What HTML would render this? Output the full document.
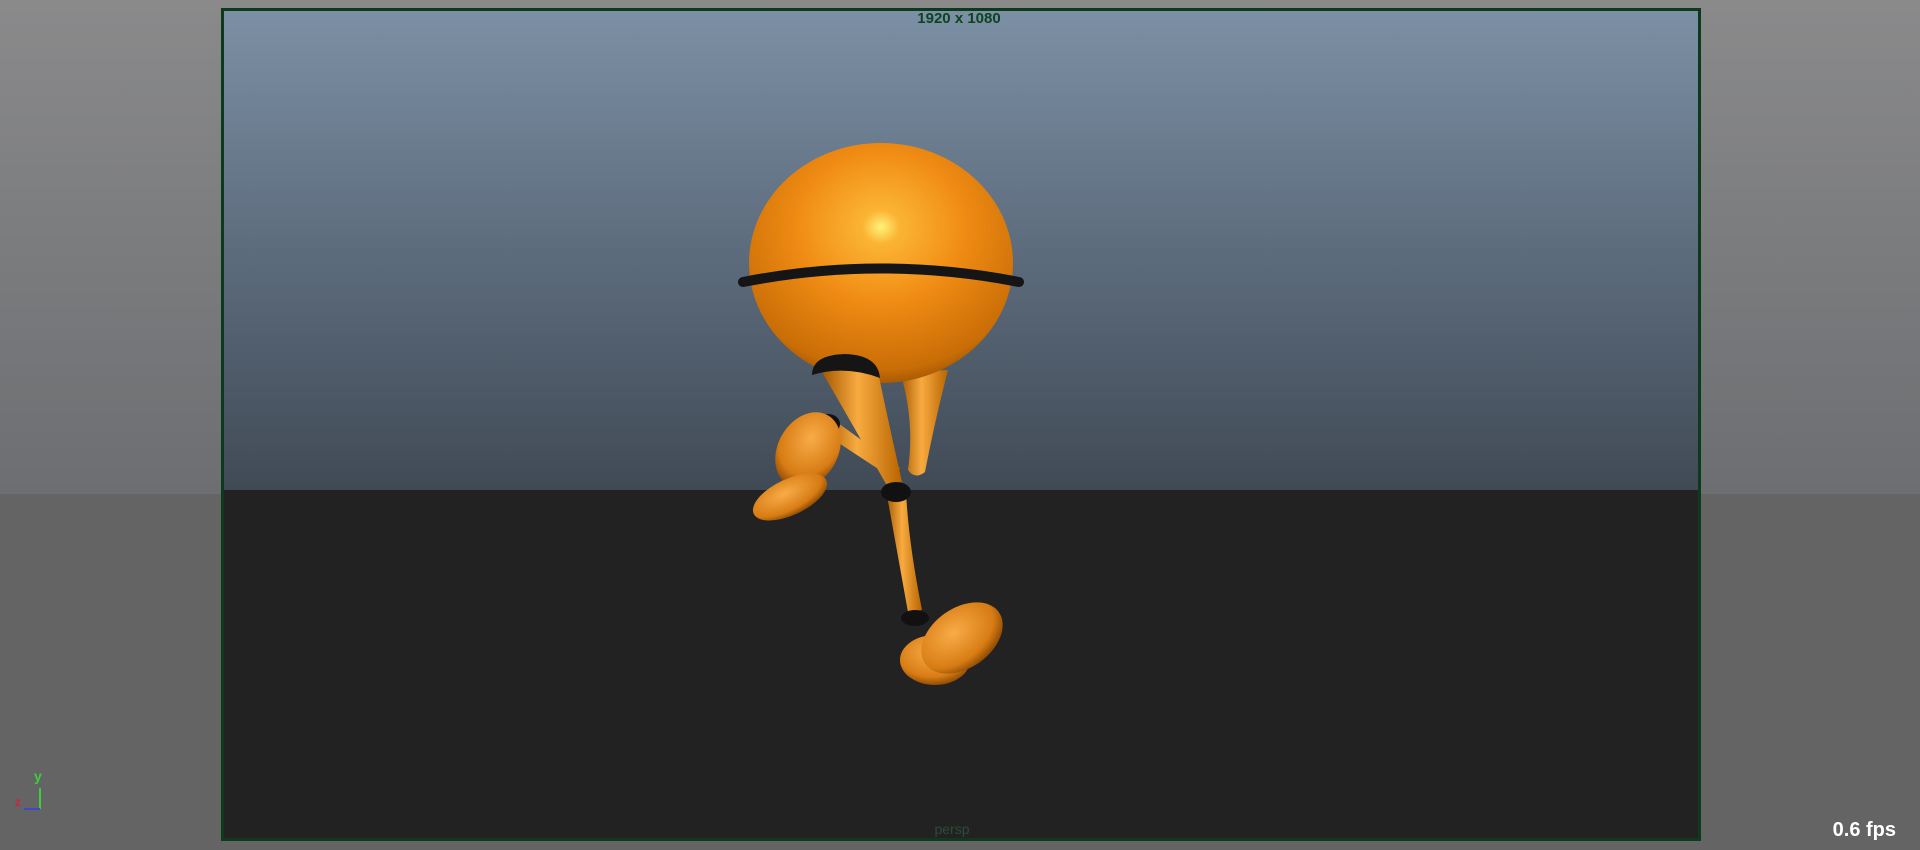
<!DOCTYPE html>
<html><head><meta charset="utf-8"><style>
html,body{margin:0;padding:0;width:1920px;height:850px;overflow:hidden;background:#646464}
svg{display:block}
</style></head><body>
<svg width="1920" height="850" viewBox="0 0 1920 850" xmlns="http://www.w3.org/2000/svg">
<defs>
<linearGradient id="out" x1="0" y1="0" x2="0" y2="1"><stop offset="0" stop-color="#8a8a8b"/><stop offset="1" stop-color="#6c6e71"/></linearGradient>
<linearGradient id="sky" x1="0" y1="0" x2="0" y2="1"><stop offset="0" stop-color="#7c90a5"/><stop offset="0.5" stop-color="#5d6c7d"/><stop offset="1" stop-color="#404a55"/></linearGradient>
<radialGradient id="ball" cx="0.5" cy="0.35" r="0.7"><stop offset="0" stop-color="#fff27a"/><stop offset="0.1" stop-color="#fbb434"/><stop offset="0.45" stop-color="#f08c14"/><stop offset="0.85" stop-color="#c96d06"/><stop offset="1" stop-color="#8a4a00"/></radialGradient>
<linearGradient id="leg" x1="0" y1="0" x2="1" y2="0"><stop offset="0" stop-color="#a55800"/><stop offset="0.45" stop-color="#f8ab40"/><stop offset="1" stop-color="#b86400"/></linearGradient>
<radialGradient id="foot" cx="0.45" cy="0.35" r="0.7"><stop offset="0" stop-color="#f8ac48"/><stop offset="0.7" stop-color="#d87c14"/><stop offset="1" stop-color="#7a3e00"/></radialGradient>
</defs>
<rect width="1920" height="494" fill="url(#out)"/>
<rect y="494" width="1920" height="356" fill="#646464"/>
<rect x="222" y="9" width="1478" height="483" fill="url(#sky)"/>
<rect x="222" y="490" width="1478" height="350" fill="#222"/>
<rect x="222.5" y="9.5" width="1477" height="830" fill="none" stroke="#0d3a1c" stroke-width="3"/>
<text x="959" y="23" text-anchor="middle" font-family="Liberation Sans, sans-serif" font-weight="bold" font-size="15" fill="#0c4420">1920 x 1080</text>
<text x="952" y="834" text-anchor="middle" font-family="Liberation Sans, sans-serif" font-size="14" fill="#2f4a36">persp</text>
<text x="1896" y="836" text-anchor="end" font-family="Liberation Sans, sans-serif" font-weight="bold" font-size="20" fill="#fff">0.6 fps</text>
<line x1="40" y1="788" x2="40" y2="809" stroke="#3ccf3c" stroke-width="2"/>
<line x1="24" y1="809" x2="40" y2="809" stroke="#4444cc" stroke-width="2"/>
<text x="34" y="781" font-family="Liberation Sans, sans-serif" font-weight="bold" font-size="14" fill="#3ccf3c">y</text>
<text x="15" y="806" font-family="Liberation Sans, sans-serif" font-weight="bold" font-size="12" fill="#d02040">z</text>
<!-- back leg -->
<path d="M900 372 Q915 420 908 470 Q915 480 925 472 Q935 420 948 370 Z" fill="url(#leg)"/>
<path d="M827 415 L900 468 L895 480 L822 432 Z" fill="url(#leg)"/>
<ellipse cx="828" cy="424" rx="12" ry="10" fill="#111"/>
<ellipse cx="808" cy="450" rx="30" ry="40" transform="rotate(30 808 450)" fill="url(#foot)"/>
<ellipse cx="790" cy="497" rx="40" ry="18" transform="rotate(-25 790 497)" fill="url(#foot)"/>
<!-- body -->
<ellipse cx="881" cy="263" rx="132" ry="120" fill="url(#ball)"/>
<path d="M743 282 Q881 255 1019 282" fill="none" stroke="#151515" stroke-width="10" stroke-linecap="round"/>
<!-- front leg -->
<path d="M822 372 Q850 360 878 372 Q888 420 902 482 L886 484 Q850 420 822 372 Z" fill="url(#leg)"/>
<path d="M886 490 L906 490 Q908 540 922 610 L908 612 Q895 540 886 490 Z" fill="url(#leg)"/>
<path d="M812 375 Q812 355 845 354 Q878 355 880 378 Q845 365 812 375 Z" fill="#151515"/>
<ellipse cx="896" cy="492" rx="15" ry="10" fill="#111"/>
<ellipse cx="915" cy="618" rx="14" ry="8" fill="#111"/>
<ellipse cx="935" cy="660" rx="35" ry="25" fill="url(#foot)"/>
<ellipse cx="962" cy="638" rx="45" ry="30" transform="rotate(-35 962 638)" fill="url(#foot)"/>
</svg>
</body></html>
